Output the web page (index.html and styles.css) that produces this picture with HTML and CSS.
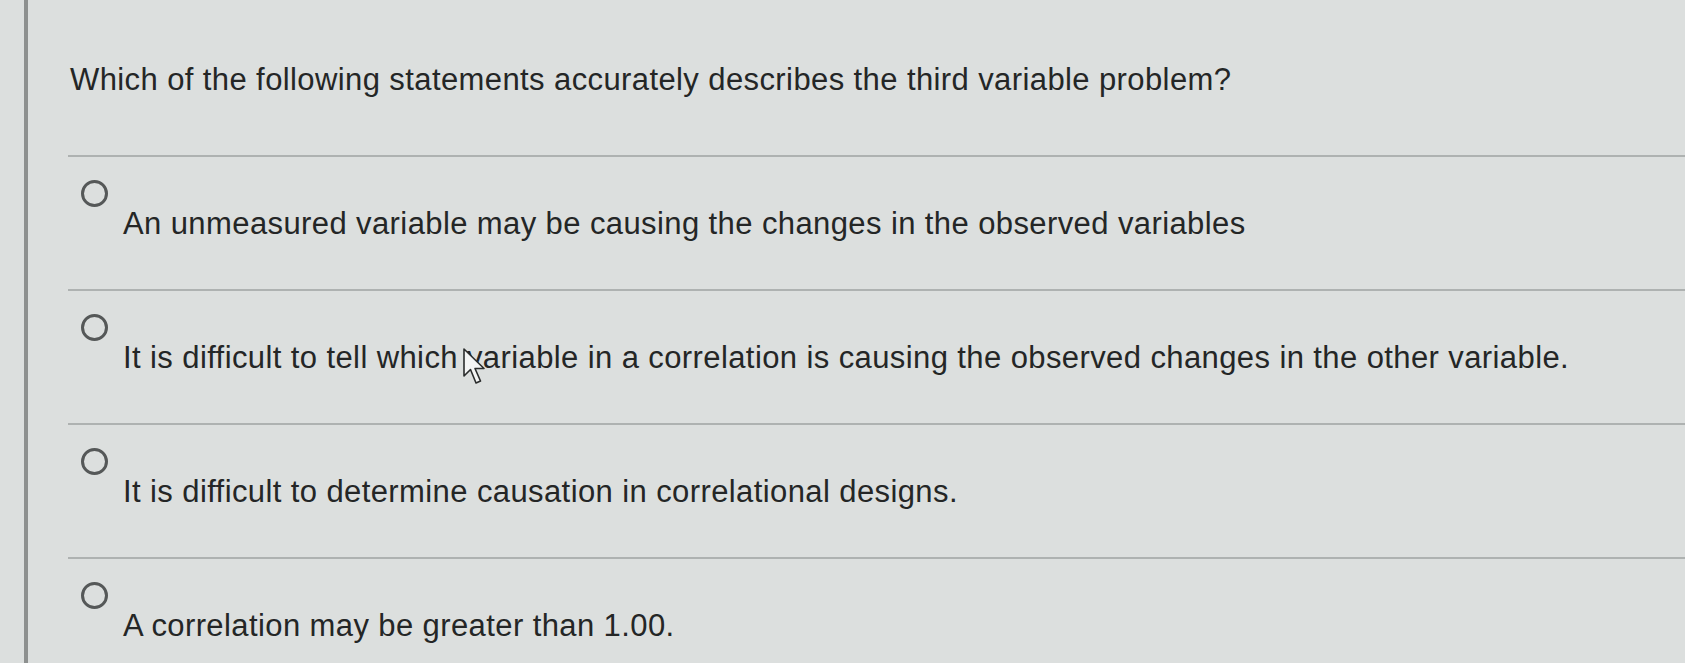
FILE: index.html
```html
<!DOCTYPE html>
<html lang="en">

<head>
    <meta charset="UTF-8">
    <meta name="viewport" content="width=device-width, initial-scale=1.0">
    <title>Question</title>
    <link rel="stylesheet" href="styles.css">
</head>

<body>
    <div class="frame">
        <div class="question">Which of the following statements accurately describes the third variable problem?</div>

        <div class="choices">
            <label class="choice">
                <span class="radio"></span>
                <span class="choice-text">An unmeasured variable may be causing the changes in the observed variables</span>
            </label>
            <label class="choice">
                <span class="radio"></span>
                <span class="choice-text">It is difficult to tell which variable in a correlation is causing the observed changes in the other variable.</span>
                <!-- mouse pointer sitting over the text -->
                <svg class="pointer" width="24" height="40" viewBox="0 0 24 40">
                    <path d="M2 2 L2 29 L8.5 22.5 L14 36 L18.5 34 L13 21.5 L22 21.5 Z" fill="#f4f5f5" stroke="#2b2d2d" stroke-width="1.6" stroke-linejoin="round"/>
                </svg>
            </label>
            <label class="choice">
                <span class="radio"></span>
                <span class="choice-text">It is difficult to determine causation in correlational designs.</span>
            </label>
            <label class="choice">
                <span class="radio"></span>
                <span class="choice-text">A correlation may be greater than 1.00.</span>
            </label>
        </div>
    </div>
</body>

</html>
```

FILE: styles.css
```css
* {
    margin: 0;
    padding: 0;
    box-sizing: border-box;
}

body {
    font-family: 'Liberation Sans', Arial, sans-serif;
    color: #242626;
    background: #dcdfde;
    min-height: 100vh;
    overflow: hidden;
}

.frame {
    margin-left: 24px;
    border-left: 4px solid #8d908f;
    min-height: 663px;
    padding-left: 40px;
}

.question {
    font-size: 31px;
    line-height: 34px;
    letter-spacing: 0.4px;
    padding: 63px 0 58px 2px;
}

.choice {
    display: flex;
    flex-direction: column;
    align-items: flex-start;
    position: relative;
    height: 134px;
    padding-top: 23px;
    border-top: 2px solid #aeb2b1;
}

.radio {
    width: 27px;
    height: 27px;
    margin-left: 13px;
    border: 3px solid #555858;
    border-radius: 50%;
}

.choice-text {
    font-size: 31px;
    line-height: 34px;
    letter-spacing: 0.4px;
    margin-left: 55px;
    white-space: nowrap;
}

.pointer {
    position: absolute;
    left: 394px;
    top: 56px;
}
```
